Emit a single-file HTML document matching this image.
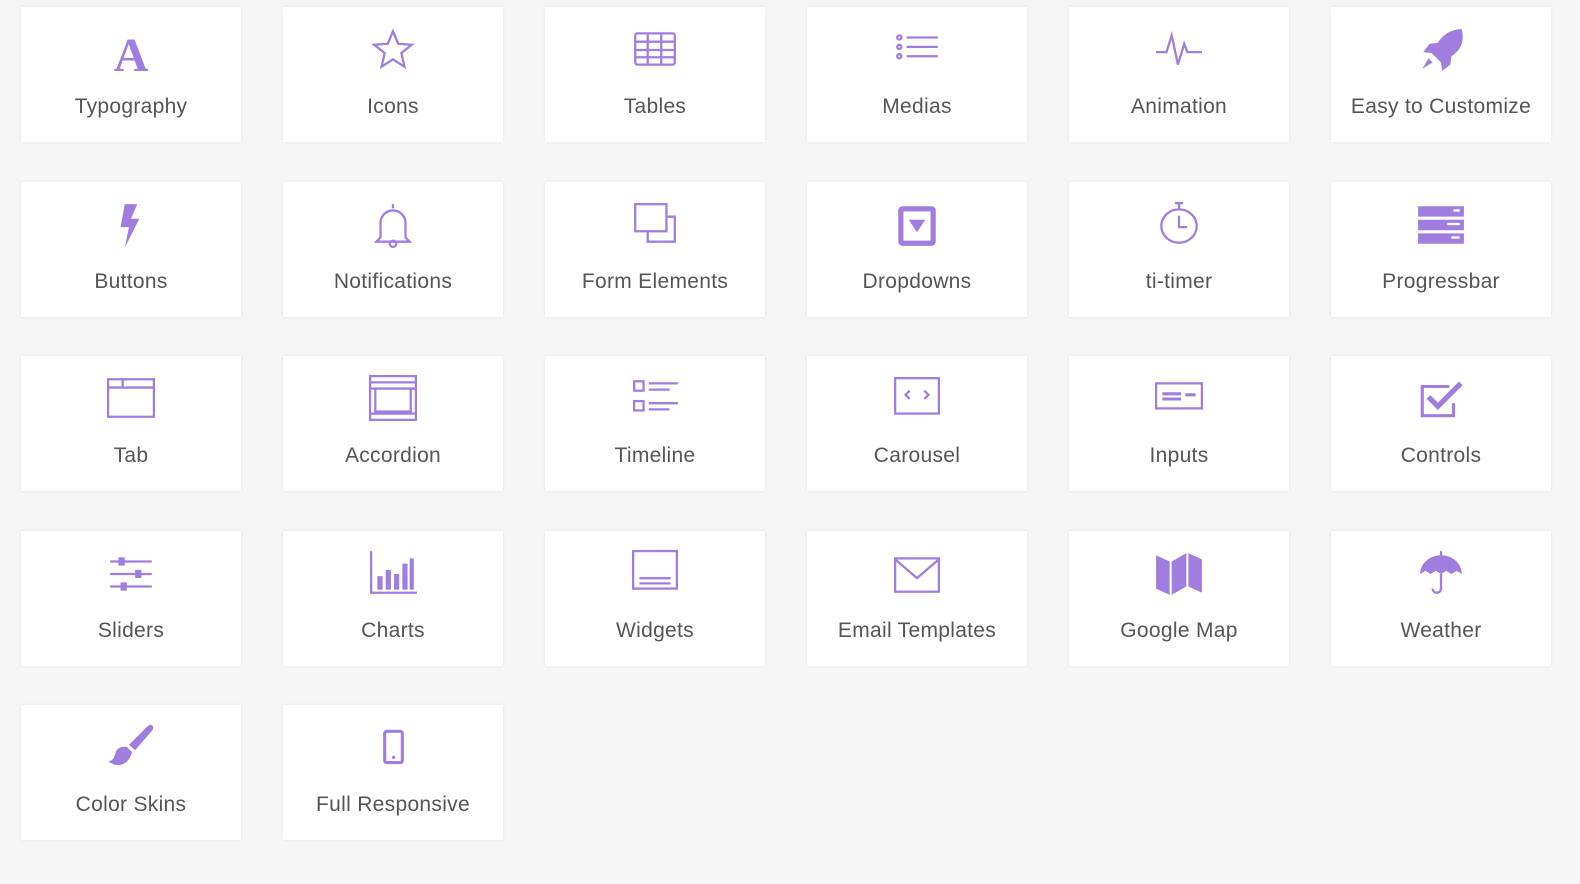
<!DOCTYPE html>
<html><head><meta charset="utf-8"><style>
body{margin:0;width:1580px;height:884px;background:#f6f6f6;position:relative;overflow:hidden;font-family:"Liberation Sans",sans-serif}
.c{position:absolute;width:220px;height:135px;background:#fff;box-shadow:0 0 3px rgba(0,0,0,.08)}
.c svg{position:absolute;left:85px;top:18px;width:50px;height:50px;fill:none;stroke:#a07ee0;stroke-width:2.2}
.c .f{fill:#a07ee0;stroke:none}
.c span{position:absolute;left:0;right:0;top:88px;line-height:24px;text-align:center;font-size:21px;color:#555;letter-spacing:.3px}
</style></head><body>
<!-- row1 -->
<div class="c" style="left:21px;top:7px"><svg viewBox="0 0 48 48"><text x="24" y="44" text-anchor="middle" font-family="Liberation Serif" font-weight="bold" font-size="46" class="f">A</text></svg><span>Typography</span></div>
<div class="c" style="left:283px;top:7px"><svg viewBox="0 0 48 48"><path d="M24 6l5 12 13 1-10 8 3 13-11-7-11 7 3-13-10-8 13-1z"/></svg><span>Icons</span></div>
<div class="c" style="left:545px;top:7px"><svg viewBox="0 0 48 48"><rect x="5" y="8" width="38" height="30" rx="2"/><path d="M5 16h38M5 24h38M5 31h38M17 8v30M30 8v30"/></svg><span>Tables</span></div>
<div class="c" style="left:807px;top:7px"><svg viewBox="0 0 48 48"><circle cx="7" cy="12" r="2"/><circle cx="7" cy="21" r="2"/><circle cx="7" cy="30" r="2"/><path d="M14 12h30M14 21h30M14 30h30"/></svg><span>Medias</span></div>
<div class="c" style="left:1069px;top:7px"><svg viewBox="0 0 48 48"><path d="M2 26h10l5-16 6 28 6-20 3 8h14"/></svg><span>Animation</span></div>
<div class="c" style="left:1331px;top:7px"><svg viewBox="0 0 48 48"><path class="f" d="M44 4c-10 0-18 5-23 13l-8 1-6 8 8 1 9 9 1 8 8-6 1-8c8-5 13-13 10-26zM12 32l-6 10 10-6z"/></svg><span>Easy to Customize</span></div>
<!-- row2 -->
<div class="c" style="left:21px;top:182px"><svg viewBox="0 0 48 48"><path class="f" d="M18 4h12l-6 14h8L18 46l4-20h-8z"/></svg><span>Buttons</span></div>
<div class="c" style="left:283px;top:182px"><svg viewBox="0 0 48 48"><path d="M24 4v4M12 36V22a12 12 0 0 1 24 0v14l4 4H8z"/><circle cx="24" cy="42" r="3"/></svg><span>Notifications</span></div>
<div class="c" style="left:545px;top:182px"><svg viewBox="0 0 48 48"><rect x="5" y="4" width="30" height="26"/><path d="M35 16h8v24H17v-10"/></svg><span>Form Elements</span></div>
<div class="c" style="left:807px;top:182px"><svg viewBox="0 0 48 48"><rect class="f" x="6" y="6" width="36" height="38" rx="4"/><rect x="11" y="11" width="26" height="28" fill="#fff" stroke="none"/><path class="f" d="M16 19h16l-8 12z"/></svg><span>Dropdowns</span></div>
<div class="c" style="left:1069px;top:182px"><svg viewBox="0 0 48 48"><path d="M20 3h8M24 3v6"/><ellipse cx="24" cy="25" rx="17" ry="16"/><path d="M24 15v11h8"/></svg><span>ti-timer</span></div>
<div class="c" style="left:1331px;top:182px"><svg viewBox="0 0 48 48"><path class="f" d="M2 6h44v10H2zM2 19h44v10H2zM2 32h44v10H2z"/><path d="M36 10h6M30 23h12M34 36h8" stroke="#fff"/></svg><span>Progressbar</span></div>
<!-- row3 -->
<div class="c" style="left:21px;top:356px"><svg viewBox="0 0 48 48"><path d="M2 5h44v36H2zM2 13h44M16 5v8"/></svg><span>Tab</span></div>
<div class="c" style="left:283px;top:356px"><svg viewBox="0 0 48 48"><path d="M2 2h44v42H2zM2 8h44M2 14h44M7 14v22h34V14M2 38h44"/></svg><span>Accordion</span></div>
<div class="c" style="left:545px;top:356px"><svg viewBox="0 0 48 48"><rect x="4" y="7" width="9" height="9"/><rect x="4" y="26" width="9" height="9"/><path d="M18 9h28M18 15h20M18 28h28M18 34h20"/></svg><span>Timeline</span></div>
<div class="c" style="left:807px;top:356px"><svg viewBox="0 0 48 48"><rect x="3" y="4" width="42" height="34"/><path d="M17 16l-4 4 4 4M31 16l4 4-4 4"/></svg><span>Carousel</span></div>
<div class="c" style="left:1069px;top:356px"><svg viewBox="0 0 48 48"><rect x="2" y="9" width="44" height="24"/><path d="M8 19h18M8 24h18M30 20h10" stroke-width="3"/></svg><span>Inputs</span></div>
<div class="c" style="left:1331px;top:356px"><svg viewBox="0 0 48 48"><path d="M36 28v12H6V12h26" stroke-width="3"/><path d="M12 22l9 9 22-22" stroke-width="5"/></svg><span>Controls</span></div>
<!-- row4 -->
<div class="c" style="left:21px;top:531px"><svg viewBox="0 0 48 48"><path d="M4 12h40M4 24h40M4 36h40"/><path class="f" d="M12 8h6v8h-6zM28 20h6v8h-6zM14 32h6v8h-6z"/></svg><span>Sliders</span></div>
<div class="c" style="left:283px;top:531px"><svg viewBox="0 0 48 48"><path d="M3 2v40h44"/><path class="f" d="M9 26h5v13H9zM17 20h5v19h-5zM25 24h5v15h-5zM33 14h5v25h-5zM40 9h4v30h-4z"/></svg><span>Charts</span></div>
<div class="c" style="left:545px;top:531px"><svg viewBox="0 0 48 48"><rect x="3" y="2" width="42" height="36"/><path d="M9 28h30M9 33h30"/></svg><span>Widgets</span></div>
<div class="c" style="left:807px;top:531px"><svg viewBox="0 0 48 48"><rect x="3" y="9" width="42" height="32"/><path d="M3 10l21 18 21-18"/></svg><span>Email Templates</span></div>
<div class="c" style="left:1069px;top:531px"><svg viewBox="0 0 48 48"><path class="f" d="M2 6l13 6v32l-13-6zM17 12l14-8v32l-14 8zM33 4l13 6v32l-13-6z"/></svg><span>Google Map</span></div>
<div class="c" style="left:1331px;top:531px"><svg viewBox="0 0 48 48"><path class="f" d="M24 6c-11 0-20 8-20 18l5-3 5 3 5-3 5 3 5-3 5 3 5-3 5 3c0-10-9-18-20-18z"/><path d="M24 2v4M24 24v14a4 4 0 0 1-8 0"/></svg><span>Weather</span></div>
<!-- row5 -->
<div class="c" style="left:21px;top:705px"><svg viewBox="0 0 48 48"><path class="f" d="M44 2c3 2 1 5-3 9L28 26l-6-5L37 6c3-3 5-5 7-4zM20 23l5 5c-2 8-8 14-17 12-2-1-4-2-6-3 5-1 6-4 7-8 1-5 6-7 11-6z"/></svg><span>Color Skins</span></div>
<div class="c" style="left:283px;top:705px"><svg viewBox="0 0 48 48"><rect x="16" y="8" width="17" height="30" rx="2" stroke-width="3"/><circle class="f" cx="24.5" cy="33" r="1.6"/></svg><span>Full Responsive</span></div>
</body></html>
